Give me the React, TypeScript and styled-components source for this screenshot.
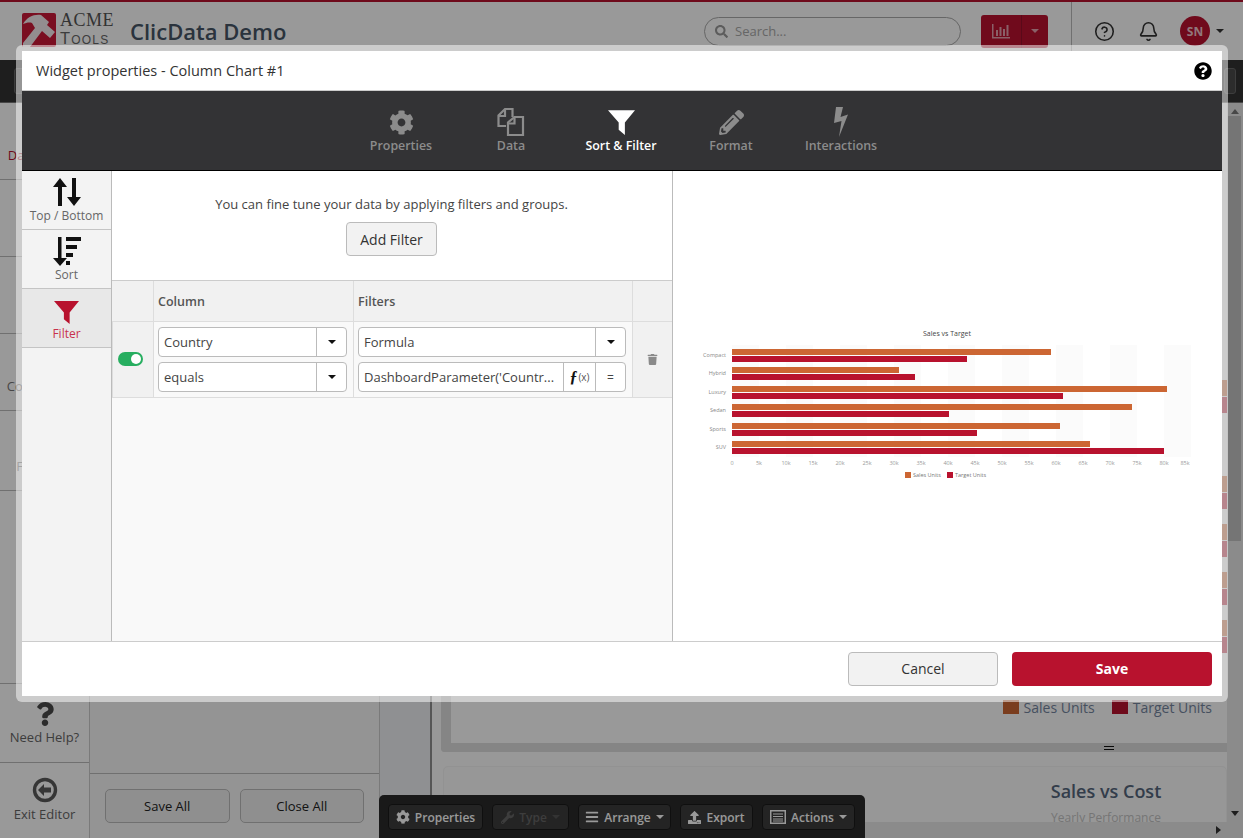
import styled, { createGlobalStyle } from 'styled-components';
import { Bell, CircleHelp } from 'lucide-react';
import { FaBars, FaCog, FaPencilAlt, FaQuestion, FaQuestionCircle, FaSearch, FaTrash, FaUpload, FaWrench } from 'react-icons/fa';

const GlobalStyle = createGlobalStyle`
	html, body {
		margin: 0;
		height: 100%;
		overflow: hidden;
		font-family: 'Open Sans', 'Liberation Sans', sans-serif;
		color: #333;
	}
	* {
		box-sizing: border-box;
	}
`;

const tabs = [
	{ label: 'Properties', icon: <FaCog size={25} /> },
	{ label: 'Data', icon: <DataIcon /> },
	{ label: 'Sort & Filter', icon: <FilterIcon size={27} />, active: true },
	{ label: 'Format', icon: <FaPencilAlt size={25} /> },
	{ label: 'Interactions', icon: <BoltIcon /> },
];

// y = top of the orange bar in the preview chart, ends in px
const previewRows = [
	{ name: 'Compact', y: 349, sales: 1051, target: 967 },
	{ name: 'Hybrid', y: 367, sales: 899, target: 915 },
	{ name: 'Luxury', y: 386, sales: 1167, target: 1063 },
	{ name: 'Sedan', y: 404, sales: 1132, target: 949 },
	{ name: 'Sports', y: 423, sales: 1060, target: 977 },
	{ name: 'SUV', y: 441, sales: 1090, target: 1164 },
];

const ticks = Array.from({ length: 18 }, (_, i) => i * 5);

function DataIcon() {
	return (
		<svg width="30" height="30" viewBox="0 0 30 30" fill="none" stroke="currentColor" strokeWidth="2.2">
			<path d="M10 19H2.5V8.5L9 2h7.5v8" />
			<path d="M9 2v7H2.5" />
			<path d="M12 28V15.5L18.5 10H27v18z" />
			<path d="M18.5 10v6.5H12" />
		</svg>
	);
}

function FilterIcon({ size }: { size: number }) {
	return (
		<svg width={size} height={size} viewBox="0 0 24 24" fill="currentColor">
			<path d="M0 1h24L15 12v11l-5.500-4.500V12z" />
		</svg>
	);
}

function BoltIcon() {
	return (
		<svg width="18" height="30" viewBox="0 0 18 30" fill="currentColor">
			<path d="M4 0h7L8.500 10 16 7.500 7 30l2.500-16L2 16z" />
		</svg>
	);
}

function TopBottomIcon() {
	return (
		<svg width="30" height="30" viewBox="0 0 30 30" fill="#111">
			<path d="M6 10H1L8 1l7 9h-5v19H6z" />
			<path d="M20 1h4v19h5l-7 9-7-9h5z" />
		</svg>
	);
}

function SortIcon() {
	return (
		<svg width="30" height="30" viewBox="0 0 30 30" fill="#111">
			<path d="M6 1h3.500v21H15l-7 8-7-8h5z" />
			<rect x="14" y="1" width="15" height="4" />
			<rect x="14" y="9" width="11" height="4" />
			<rect x="14" y="17" width="7" height="4" />
			<rect x="14" y="25" width="4" height="4" />
		</svg>
	);
}

function ChartButtonIcon() {
	return (
		<svg width="18" height="16" viewBox="0 0 18 16" fill="#e6a0ad">
			<rect x="0" y="14" width="18" height="1.500" />
			<rect x="0" y="1" width="1.500" height="14" />
			<rect x="4" y="7" width="2" height="6" />
			<rect x="7.500" y="4" width="2" height="9" />
			<rect x="11" y="6" width="2" height="7" />
			<rect x="14.500" y="2" width="2" height="11" />
		</svg>
	);
}

function ExitIcon() {
	return (
		<svg width="26" height="26" viewBox="0 0 26 26" fill="none">
			<circle cx="13" cy="13" r="10.500" stroke="#5a5a5a" strokeWidth="3.400" />
			<path d="M6 13l6-6v3.500h7v5h-7V19z" fill="#5a5a5a" />
		</svg>
	);
}

function ListIcon() {
	return (
		<svg width="16" height="14" viewBox="0 0 16 14" fill="none" stroke="currentColor">
			<rect x="0.750" y="0.750" width="14.500" height="12.500" strokeWidth="1.500" />
			<path d="M3 4h10M3 6.500h10M3 9h10M3 11h10" strokeWidth="1.200" />
		</svg>
	);
}

function LogoMark() {
	return (
		<svg width="34" height="34" viewBox="0 0 34 34">
			<rect x="0" y="0" width="34" height="34" rx="2" fill="#cc1838" />
			<path
				d="M1 11C5 4 12 1 19 2l8 7-2 3 8 7-5 6-8-7L8 34H1v-4l12-15-3-5c-3-1-6 0-9 1z"
				fill="#f6ecee"
			/>
		</svg>
	);
}

function WidgetBars() {
	const rows = [380, 476, 524, 572, 620];
	return (
		<BackChart viewBox="441 114 786 576">
			{rows.map((y) => (
				<g key={y}>
					<rect x="560" y={y} width="667" height="16" fill="#cc6633" />
					<rect x="560" y={y + 17} width="667" height="16" fill="#b8122e" />
				</g>
			))}
		</BackChart>
	);
}

function PreviewChart() {
	return (
		<PreviewSvg viewBox="673 171 549 470">
			{ticks.slice(0, 17).map((t, i) =>
				i % 2 === 0 ? <rect key={t} x={732 + t * 5.4} y="345" width="27" height="112" fill="#fbfbfb" /> : null
			)}
			<text x="947" y="336" textAnchor="middle" fontSize="7" fill="#444">
				Sales vs Target
			</text>
			{previewRows.map((r) => (
				<g key={r.name}>
					<text x="726" y={r.y + 8} textAnchor="end" fontSize="5.500" fill="#888">
						{r.name}
					</text>
					<rect x="732" y={r.y} width={r.sales - 732} height="6" fill="#cc6633" />
					<rect x="732" y={r.y + 7} width={r.target - 732} height="6" fill="#b8122e" />
				</g>
			))}
			{ticks.map((t) => (
				<text key={t} x={t === 85 ? 1185 : 732 + t * 5.4} y="465" textAnchor="middle" fontSize="5.500" fill="#999">
					{t === 0 ? '0' : `${t}k`}
				</text>
			))}
			<rect x="905" y="472" width="6" height="6" fill="#cc6633" />
			<text x="913" y="477" fontSize="5.500" fill="#777">
				Sales Units
			</text>
			<rect x="947" y="472" width="6" height="6" fill="#b8122e" />
			<text x="955" y="477" fontSize="5.500" fill="#777">
				Target Units
			</text>
		</PreviewSvg>
	);
}

const App = () => {
	return (
		<Page>
			<GlobalStyle />
			<Header>
				<Logo>
					<LogoMark />
					<LogoText>
						<LogoAcme>ACME</LogoAcme>
						<LogoTools>Tools</LogoTools>
					</LogoText>
				</Logo>
				<AppTitle>ClicData Demo</AppTitle>
				<Search>
					<FaSearch size={13} color="#999" />
					Search...
				</Search>
				<RedSplit>
					<RedMain>
						<ChartButtonIcon />
					</RedMain>
					<RedCaret>
						<Caret $color="#e6a0ad" />
					</RedCaret>
				</RedSplit>
				<HeaderDivider />
				<HeaderIcon>
					<CircleHelp size={21} strokeWidth={1.8} />
				</HeaderIcon>
				<HeaderIcon>
					<Bell size={21} strokeWidth={1.8} />
				</HeaderIcon>
				<Avatar>SN</Avatar>
				<Caret $color="#333" />
			</Header>
			<NavBar>
				<NavStub />
				<NavStub />
			</NavBar>
			<Workspace>
				<Rail>
					<RailRow $height={77} $color="#b8122e">
						<RailLabel>Dashboards</RailLabel>
					</RailRow>
					<RailRow $height={77} />
					<RailRow $height={77} />
					<RailRow $height={77}>
						<RailLabel>Connections</RailLabel>
					</RailRow>
					<RailRow $height={80}>
						<RailLabel>Formulas</RailLabel>
					</RailRow>
					<RailSpacer />
					<RailAction>
						<FaQuestion size={24} color="#4a4a4a" />
						Need Help?
					</RailAction>
					<RailAction $last>
						<ExitIcon />
						Exit Editor
					</RailAction>
				</Rail>
				<SidePanel>
					<PanelBody />
					<PanelFooter>
						<PanelButton>Save All</PanelButton>
						<PanelButton>Close All</PanelButton>
					</PanelFooter>
				</SidePanel>
				<Canvas>
					<Stage>
						<ChartWidget>
							<WidgetBars />
							<Legend>
								<LegendSwatch $color="#cc6633" />
								<LegendText>Sales Units</LegendText>
								<LegendSwatch $color="#b8122e" />
								<LegendText>Target Units</LegendText>
							</Legend>
							<Resizer>
								<ResizerGrip />
							</Resizer>
						</ChartWidget>
						<TitleWidget>
							<WidgetTitle>Sales vs Cost</WidgetTitle>
							<WidgetSubtitle>Yearly Performance</WidgetSubtitle>
						</TitleWidget>
					</Stage>
					<HScroll>
						<ArrowRight />
					</HScroll>
					<Toolbar>
						<ToolButton $width={95}>
							<FaCog size={14} />
							Properties
						</ToolButton>
						<ToolButton $width={77} $disabled>
							<FaWrench size={13} />
							Type
							<Caret $color="#555" />
						</ToolButton>
						<ToolButton $width={93}>
							<FaBars size={14} />
							Arrange
							<Caret $color="#fff" />
						</ToolButton>
						<ToolButton $width={73}>
							<FaUpload size={13} />
							Export
						</ToolButton>
						<ToolButton $width={93}>
							<ListIcon />
							Actions
							<Caret $color="#fff" />
						</ToolButton>
					</Toolbar>
				</Canvas>
				<VScroll>
					<ArrowUp />
					<VThumb />
					<ArrowDown />
				</VScroll>
			</Workspace>
			<Overlay />
			<Modal>
				<TitleBar>
					Widget properties - Column Chart #1
					<FaQuestionCircle size={18} color="#000" />
				</TitleBar>
				<TabBar>
					{tabs.map((t) => (
						<Tab key={t.label} $active={t.active}>
							<TabIcon>{t.icon}</TabIcon>
							{t.label}
						</Tab>
					))}
				</TabBar>
				<ModalBody>
					<SideMenu>
						<SideItem>
							<TopBottomIcon />
							Top / Bottom
						</SideItem>
						<SideItem>
							<SortIcon />
							Sort
						</SideItem>
						<SideItem $active>
							<FilterIcon size={25} />
							Filter
						</SideItem>
					</SideMenu>
					<MainPane>
						<Intro>
							You can fine tune your data by applying filters and groups.
							<AddFilter>Add Filter</AddFilter>
						</Intro>
						<FilterGrid>
							<HeadCell />
							<HeadCell>Column</HeadCell>
							<HeadCell>Filters</HeadCell>
							<HeadCell />
							<SideCell>
								<Toggle />
							</SideCell>
							<FieldCell>
								<InputGroup>
									<Field>Country</Field>
									<AddOn $width={30}>
										<Caret $color="#111" />
									</AddOn>
								</InputGroup>
								<InputGroup>
									<Field>equals</Field>
									<AddOn $width={30}>
										<Caret $color="#111" />
									</AddOn>
								</InputGroup>
							</FieldCell>
							<FieldCell>
								<InputGroup>
									<Field>Formula</Field>
									<AddOn $width={30}>
										<Caret $color="#111" />
									</AddOn>
								</InputGroup>
								<InputGroup>
									<Field>DashboardParameter('Countr...</Field>
									<AddOn $width={32}>
										<FxMark>ƒ</FxMark>
										<FxParen>(x)</FxParen>
									</AddOn>
									<AddOn $width={30}>=</AddOn>
								</InputGroup>
							</FieldCell>
							<SideCell>
								<FaTrash size={11} color="#8a8a8a" />
							</SideCell>
						</FilterGrid>
					</MainPane>
					<Preview>
						<PreviewChart />
					</Preview>
				</ModalBody>
				<Footer>
					<CancelButton>Cancel</CancelButton>
					<SaveButton>Save</SaveButton>
				</Footer>
			</Modal>
		</Page>
	);
};

export default App;

const Page = styled.div`
	position: relative;
	width: 100%;
	height: 100vh;
	overflow: hidden;
	display: flex;
	flex-direction: column;
	background: #fff;
`;

const Header = styled.div`
	height: 60px;
	flex: none;
	display: flex;
	align-items: center;
	padding-left: 22px;
	background: #fff;
	border-top: 2px solid #b8122e;
`;

const Logo = styled.div`
	display: flex;
	align-items: center;
	gap: 4px;
	width: 108px;
	margin-bottom: 2px;
`;

const LogoText = styled.div`
	display: flex;
	flex-direction: column;
	gap: 1px;
	margin-top: -2px;
`;

const LogoAcme = styled.span`
	font-family: 'Liberation Serif', serif;
	font-size: 18px;
	line-height: 17px;
	letter-spacing: 0.500px;
	color: #555;
`;

const LogoTools = styled.span`
	font-family: 'Liberation Sans', sans-serif;
	font-size: 16.500px;
	line-height: 17px;
	letter-spacing: 1.200px;
	font-variant: small-caps;
	color: #666;
`;

const AppTitle = styled.div`
	font-size: 22px;
	font-weight: 600;
	color: #465566;
	width: 574px;
	white-space: nowrap;
`;

const Search = styled.div`
	width: 257px;
	height: 29px;
	flex: none;
	display: flex;
	align-items: center;
	gap: 7px;
	padding-left: 10px;
	border: 1px solid #aaa;
	border-radius: 15px;
	font-size: 13px;
	color: #aaa;
`;

const RedSplit = styled.div`
	display: flex;
	width: 67px;
	height: 33px;
	margin-left: 20px;
	flex: none;
	border-radius: 3px;
	overflow: hidden;
	background: #bb1130;
`;

const RedMain = styled.div`
	width: 41px;
	display: flex;
	align-items: center;
	justify-content: center;
	border-right: 1px solid #96102a;
`;

const RedCaret = styled.div`
	flex: 1;
	display: flex;
	align-items: center;
	justify-content: center;
`;

const HeaderDivider = styled.div`
	width: 1px;
	height: 58px;
	background: #bbb;
	margin-left: 23px;
	margin-right: 10px;
	flex: none;
`;

const HeaderIcon = styled.div`
	width: 44px;
	display: flex;
	justify-content: center;
	color: #333;
	flex: none;
`;

const Avatar = styled.div`
	width: 30px;
	height: 30px;
	margin-left: 10px;
	margin-right: 6px;
	flex: none;
	border-radius: 50%;
	background: #bb1130;
	color: #f2c6ce;
	font-size: 12px;
	font-weight: 700;
	display: flex;
	align-items: center;
	justify-content: center;
`;

const Caret = styled.span<{ $color: string }>`
	display: inline-block;
	flex: none;
	width: 0;
	height: 0;
	border-left: 4px solid transparent;
	border-right: 4px solid transparent;
	border-top: 4px solid ${({ $color }) => $color};
`;

const NavBar = styled.div`
	height: 43px;
	flex: none;
	display: flex;
	align-items: center;
	justify-content: space-between;
	padding: 0 7px 0 14px;
	background: #333;
	border-bottom: 1px solid #777;
`;

const NavStub = styled.div`
	width: 12px;
	height: 26px;
	border: 1px solid #666;
	border-radius: 3px;
	background: #4a4a4a;
`;

const Workspace = styled.div`
	flex: 1;
	min-height: 0;
	display: flex;
`;

const Rail = styled.div`
	width: 90px;
	flex: none;
	display: flex;
	flex-direction: column;
	border-right: 1px solid #ccc;
	background: #fff;
`;

const RailRow = styled.div<{ $height: number; $color?: string }>`
	height: ${({ $height }) => $height}px;
	flex: none;
	display: flex;
	flex-direction: column;
	justify-content: flex-end;
	align-items: center;
	padding-bottom: 15px;
	border-bottom: 1px solid #bbb;
	color: ${({ $color }) => $color || '#777'};
`;

const RailLabel = styled.span`
	font-size: 13px;
	white-space: nowrap;
`;

const RailSpacer = styled.div`
	flex: 1;
`;

const RailAction = styled.div<{ $last?: boolean }>`
	height: ${({ $last }) => ($last ? 76 : 79)}px;
	flex: none;
	display: flex;
	flex-direction: column;
	align-items: center;
	justify-content: flex-end;
	gap: 2px;
	padding-bottom: ${({ $last }) => ($last ? 15 : 16)}px;
	border-top: 1px solid #bbb;
	font-size: 13px;
	color: #666;
`;

const SidePanel = styled.div`
	width: 290px;
	flex: none;
	display: flex;
	flex-direction: column;
	background: #f7f7f7;
	border-right: 1px solid #ccc;
`;

const PanelBody = styled.div`
	flex: 1;
`;

const PanelFooter = styled.div`
	height: 65px;
	flex: none;
	display: flex;
	gap: 10px;
	padding: 15px 15px 0;
	border-top: 1px solid #bbb;
`;

const PanelButton = styled.div`
	width: 125px;
	height: 34px;
	display: flex;
	align-items: center;
	justify-content: center;
	border: 1px solid #bbb;
	border-radius: 5px;
	background: #eee;
	font-size: 13px;
	color: #222;
`;

const Canvas = styled.div`
	position: relative;
	flex: 1;
	min-width: 0;
	padding-left: 50px;
	background: #eff0f4;
`;

const Stage = styled.div`
	height: 100%;
	padding: 11px 0 0 9px;
	border-left: 2px solid #8f8f8f;
	background: #fdfdfd;
	overflow: hidden;
`;

const ChartWidget = styled.div`
	height: 638px;
	display: flex;
	flex-direction: column;
	border-left: 10px solid #dedede;
	border-bottom-left-radius: 4px;
	background: #fff;
`;

const BackChart = styled.svg`
	display: block;
	width: calc(100% + 10px);
	height: 576px;
	flex: none;
	margin-left: -10px;
	overflow: visible;
`;

const Legend = styled.div`
	display: flex;
	align-items: center;
	justify-content: flex-end;
	height: 34px;
	padding-right: 15px;
`;

const LegendSwatch = styled.span<{ $color: string }>`
	width: 16px;
	height: 14px;
	margin-right: 5px;
	background: ${({ $color }) => $color};
`;

const LegendText = styled.span`
	font-size: 14px;
	color: #75869f;
	margin-right: 17px;

	&:last-child {
		margin-right: 0;
	}
`;

const Resizer = styled.div`
	margin-top: auto;
	height: 9px;
	flex: none;
	margin-left: -10px;
	background: #dedede;
	border-bottom-left-radius: 4px;
	display: flex;
	align-items: center;
	justify-content: center;
	padding-left: 550px;
`;

const ResizerGrip = styled.span`
	width: 10px;
	height: 4px;
	border-top: 1px solid #111;
	border-bottom: 1px solid #111;
`;

const TitleWidget = styled.div`
	margin-top: 14px;
	margin-left: 2px;
	height: 90px;
	padding: 12px 14px 0 556px;
	display: flex;
	flex-direction: column;
	align-items: center;
	background: #fcfcfc;
	border: 1px solid #f3f3f3;
	border-radius: 5px;
`;

const WidgetTitle = styled.div`
	font-size: 18px;
	font-weight: 600;
	color: #55667c;
	white-space: nowrap;
`;

const WidgetSubtitle = styled.div`
	margin-top: 6px;
	font-size: 12px;
	color: #c4c4c4;
	white-space: nowrap;
`;

const HScroll = styled.div`
	position: absolute;
	left: 0;
	right: 0;
	bottom: 0;
	height: 16px;
	display: flex;
	align-items: center;
	justify-content: flex-end;
	padding-right: 6px;
	background: #e8e8e8;
`;

const ArrowRight = styled.span`
	width: 0;
	height: 0;
	border-top: 4px solid transparent;
	border-bottom: 4px solid transparent;
	border-left: 5px solid #333;
`;

const Toolbar = styled.div`
	position: absolute;
	left: -1px;
	bottom: 0;
	width: 486px;
	height: 43px;
	display: flex;
	gap: 9px;
	padding: 9px 9px 0;
	background: #2b2b2b;
	border-radius: 5px 5px 0 0;
`;

const ToolButton = styled.div<{ $width: number; $disabled?: boolean }>`
	width: ${({ $width }) => $width}px;
	height: 26px;
	flex: none;
	display: flex;
	align-items: center;
	justify-content: center;
	gap: 5px;
	border: 1px solid #1a1a1a;
	border-radius: 4px;
	background: #3d3d3d;
	font-size: 12px;
	font-weight: 600;
	white-space: nowrap;
	color: ${({ $disabled }) => ($disabled ? '#666' : '#fff')};
`;

const VScroll = styled.div`
	width: 16px;
	flex: none;
	display: flex;
	flex-direction: column;
	align-items: center;
	background: #e8e8e8;
	padding: 6px 0 22px;
`;

const VThumb = styled.div`
	width: 13px;
	margin-left: -2px;
	height: 425px;
	background: #c4c4c4;
	margin-top: 2px;
`;

const ArrowUp = styled.span`
	width: 0;
	height: 0;
	border-left: 4px solid transparent;
	border-right: 4px solid transparent;
	border-bottom: 5px solid #777;
`;

const ArrowDown = styled.span`
	margin-top: auto;
	width: 0;
	height: 0;
	border-left: 4px solid transparent;
	border-right: 4px solid transparent;
	border-top: 5px solid #333;
`;

const Overlay = styled.div`
	position: absolute;
	inset: 0;
	background: rgba(0, 0, 0, 0.4);
`;

const Modal = styled.div`
	position: absolute;
	left: 16px;
	top: 45px;
	width: 1212px;
	height: 657px;
	display: flex;
	flex-direction: column;
	border: 6px solid rgba(255, 255, 255, 0.5);
	border-radius: 6px;
	background: #fff;
	background-clip: padding-box;
`;

const TitleBar = styled.div`
	height: 40px;
	flex: none;
	display: flex;
	align-items: center;
	justify-content: space-between;
	padding: 0 10px 0 14px;
	border-bottom: 1px solid #ccc;
	font-size: 14.500px;
	color: #333;
`;

const TabBar = styled.div`
	height: 80px;
	flex: none;
	display: flex;
	justify-content: center;
	padding-right: 2px;
	background: #333335;
	border-bottom: 1px solid #000;
`;

const Tab = styled.div<{ $active?: boolean }>`
	width: 110px;
	display: flex;
	flex-direction: column;
	align-items: center;
	padding-top: 16px;
	font-size: 12.400px;
	font-weight: 600;
	color: ${({ $active }) => ($active ? '#fff' : '#8c8c8c')};
`;

const TabIcon = styled.div`
	height: 30px;
	display: flex;
	align-items: center;
	justify-content: center;
`;

const ModalBody = styled.div`
	flex: 1;
	min-height: 0;
	display: flex;
`;

const SideMenu = styled.div`
	width: 90px;
	flex: none;
	background: #f3f3f3;
	border-right: 1px solid #bbb;
`;

const SideItem = styled.div<{ $active?: boolean }>`
	height: 59px;
	display: flex;
	flex-direction: column;
	align-items: center;
	justify-content: flex-end;
	padding-bottom: 5px;
	border-bottom: 1px solid #c4c4c4;
	font-size: 12px;
	background: ${({ $active }) => ($active ? '#e8e8e8' : 'transparent')};
	color: ${({ $active }) => ($active ? '#c8324e' : '#666')};

	svg {
		color: #b8122e;
	}
`;

const MainPane = styled.div`
	width: 561px;
	flex: none;
	display: flex;
	flex-direction: column;
	background: #f9f9f9;
	border-right: 1px solid #bbb;
`;

const Intro = styled.div`
	height: 109px;
	flex: none;
	display: flex;
	flex-direction: column;
	align-items: center;
	padding: 24px 1px 0 0;
	background: #fff;
	font-size: 13px;
	color: #444;
`;

const AddFilter = styled.div`
	width: 91px;
	height: 34px;
	margin-top: 9px;
	display: flex;
	align-items: center;
	justify-content: center;
	background: #f2f2f2;
	border: 1px solid #bbb;
	border-radius: 4px;
	font-size: 14px;
	color: #333;
`;

const FilterGrid = styled.div`
	display: grid;
	grid-template-columns: 41px 200px 279px 40px;
	grid-template-rows: 41px 76px;
	border-top: 1px solid #ccc;
`;

const HeadCell = styled.div`
	display: flex;
	align-items: center;
	padding-left: 4px;
	background: #f1f1f1;
	border-bottom: 1px solid #ddd;
	border-left: 1px solid #ddd;
	font-size: 12.500px;
	font-weight: 600;
	color: #555;

	&:first-child {
		border-left: 0;
	}
`;

const SideCell = styled.div`
	display: flex;
	align-items: center;
	justify-content: center;
	background: #f1f1f1;
	border-bottom: 1px solid #ddd;
	border-left: 1px solid #ddd;
`;

const FieldCell = styled.div`
	display: flex;
	flex-direction: column;
	gap: 5px;
	padding: 5px 5px 5px 4px;
	border-bottom: 1px solid #ddd;
	border-left: 1px solid #ddd;

	& + & {
		padding-right: 5px;
	}
	&:nth-child(6) {
		padding-right: 5px;
	}
	& > div {
		margin-right: 1px;
	}
`;

const Toggle = styled.div`
	position: relative;
	width: 25px;
	height: 14px;
	margin: 0 5px 1px 0;
	border-radius: 7px;
	background: #27ae60;

	&::after {
		content: '';
		position: absolute;
		top: 2px;
		right: 2px;
		width: 10px;
		height: 10px;
		border-radius: 50%;
		background: #fff;
	}
`;

const InputGroup = styled.div`
	height: 30px;
	display: flex;
	background: #fff;
	border: 1px solid #bbb;
	border-radius: 4px;
`;

const Field = styled.div`
	flex: 1;
	min-width: 0;
	padding-left: 5px;
	display: flex;
	align-items: center;
	font-size: 13px;
	color: #444;
	white-space: nowrap;
`;

const AddOn = styled.div<{ $width: number }>`
	width: ${({ $width }) => $width}px;
	flex: none;
	display: flex;
	align-items: center;
	justify-content: center;
	border-left: 1px solid #bbb;
	font-size: 12px;
	color: #444;
`;

const FxMark = styled.span`
	font-family: 'Liberation Serif', serif;
	font-weight: 700;
	font-style: italic;
	font-size: 16px;
	color: #111;
`;

const FxParen = styled.span`
	font-size: 10px;
	margin-left: 1px;
	color: #555;
`;

const Preview = styled.div`
	flex: 1;
	min-width: 0;
	background: #fff;
`;

const PreviewSvg = styled.svg`
	display: block;
	width: 100%;
	height: 100%;
	font-family: 'Open Sans', sans-serif;
`;

const Footer = styled.div`
	height: 55px;
	flex: none;
	display: flex;
	justify-content: flex-end;
	gap: 14px;
	padding: 10px 10px 0 0;
	border-top: 1px solid #ccc;
`;

const CancelButton = styled.div`
	width: 150px;
	height: 34px;
	padding-bottom: 2px;
	display: flex;
	align-items: center;
	justify-content: center;
	background: #f2f2f2;
	border: 1px solid #bbb;
	border-radius: 4px;
	font-size: 14px;
	color: #333;
`;

const SaveButton = styled.div`
	width: 200px;
	height: 34px;
	padding-bottom: 2px;
	display: flex;
	align-items: center;
	justify-content: center;
	background: #b8122e;
	border-radius: 4px;
	font-size: 14px;
	font-weight: 700;
	color: #fff;
`;
